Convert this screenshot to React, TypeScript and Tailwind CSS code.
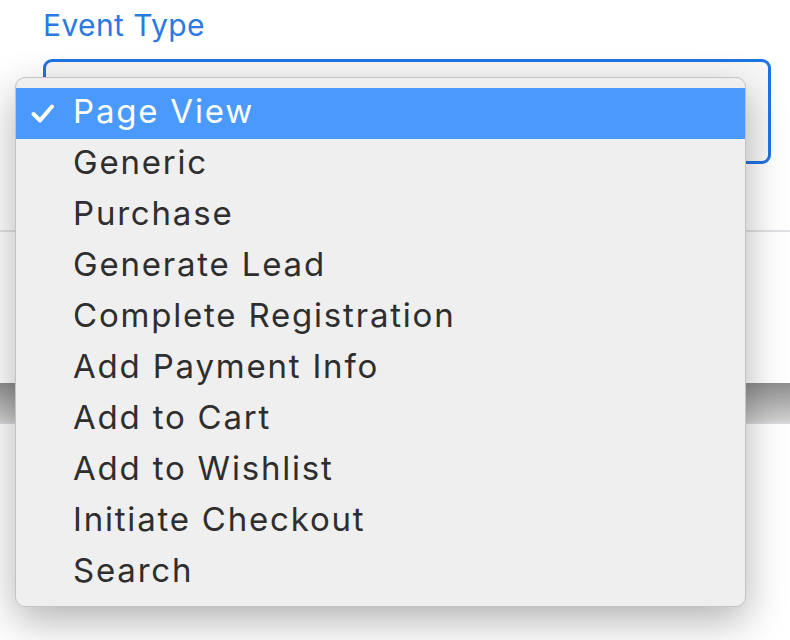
const items = [
  'Page View',
  'Generic',
  'Purchase',
  'Generate Lead',
  'Complete Registration',
  'Add Payment Info',
  'Add to Cart',
  'Add to Wishlist',
  'Initiate Checkout',
  'Search',
]

export default function App() {
  return (
    <div className="relative h-[640px] w-[790px] overflow-hidden bg-white font-['Inter','Liberation_Sans',sans-serif]">
      {/* Field */}
      <div className="pl-[43px] pt-[8px]">
        <label className="block h-[34px] text-[30px] leading-[34px] tracking-[0.4px] text-[#2a7ae2]">Event Type</label>
      </div>
      <div className="ml-[43px] mt-[17px] h-[105px] w-[728px] rounded-[9px] border-[3px] border-[#1f74e6] bg-[#f8f8f8]" />

      {/* Page behind */}
      <div className="mt-[66px] h-[2px] w-full bg-[#e2e2e6]" />
      <div className="mt-[151px] h-[41px] w-full border-b-[2px] border-[#d9d9de] bg-gradient-to-b from-[#8f8f8f] to-[#d2d2d2]" />

      {/* Dropdown */}
      <div className="absolute left-[15px] top-[77px] w-[731px] rounded-[10px] border border-[#c3c3c3] bg-[#efefef] pb-[8px] pt-[10px] shadow-[0_14px_40px_rgba(0,0,0,0.3)]">
        {items.map((item, i) => (
          <div
            key={item}
            className={
              i === 0
                ? 'flex h-[51px] items-center bg-[#4a9afd] text-white'
                : 'flex h-[51px] items-center text-[#2e2e2e]'
            }
          >
            <div className="flex w-[57px] justify-start pl-[15px]">
              {i === 0 && (
                <svg width="24" height="20" viewBox="0 0 24 20">
                  <path d="M2.5 10 L9 16.5 L21 2.5" fill="none" stroke="white" strokeWidth="4" strokeLinecap="round" strokeLinejoin="round" />
                </svg>
              )}
            </div>
            <span className="pb-[6px] text-[33px] leading-[40px] tracking-[1.8px]">{item}</span>
          </div>
        ))}
      </div>
    </div>
  )
}
